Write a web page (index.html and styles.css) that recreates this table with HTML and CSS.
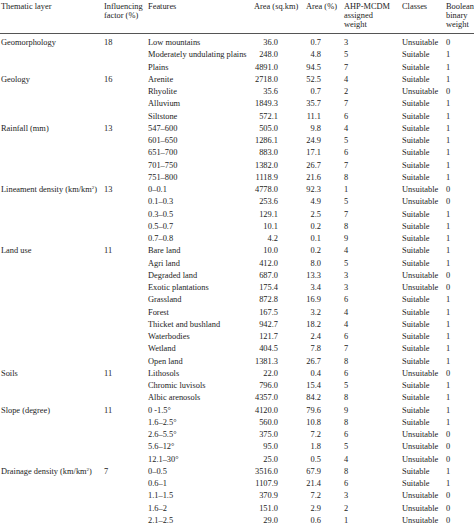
FILE: index.html
```html
<!DOCTYPE html>
<html>
<head>
<meta charset="utf-8">
<link rel="stylesheet" href="styles.css">
</head>
<body>
<table class="tbl">
<colgroup>
<col class="c-layer"><col class="c-factor"><col class="c-feat"><col class="c-area"><col class="c-pct"><col class="c-ahp"><col class="c-cls"><col class="c-bool">
</colgroup>
<thead>
<tr class="head">
<th>Thematic layer</th>
<th>Influencing<br>factor (%)</th>
<th>Features</th>
<th>Area (sq.km)</th>
<th>Area (%)</th>
<th>AHP-MCDM<br>assigned<br>weight</th>
<th>Classes</th>
<th>Boolean<br>binary<br>weight</th>
</tr>
</thead>
<tbody>
<tr class="first"><td>Geomorphology</td><td>18</td><td>Low mountains</td><td class="n1">36.0</td><td class="n2">0.7</td><td>3</td><td>Unsuitable</td><td>0</td></tr>
<tr><td></td><td></td><td>Moderately undulating plains</td><td class="n1">248.0</td><td class="n2">4.8</td><td>5</td><td>Suitable</td><td>1</td></tr>
<tr><td></td><td></td><td>Plains</td><td class="n1">4891.0</td><td class="n2">94.5</td><td>7</td><td>Suitable</td><td>1</td></tr>
<tr><td>Geology</td><td>16</td><td>Arenite</td><td class="n1">2718.0</td><td class="n2">52.5</td><td>4</td><td>Suitable</td><td>1</td></tr>
<tr><td></td><td></td><td>Rhyolite</td><td class="n1">35.6</td><td class="n2">0.7</td><td>2</td><td>Unsuitable</td><td>0</td></tr>
<tr><td></td><td></td><td>Alluvium</td><td class="n1">1849.3</td><td class="n2">35.7</td><td>7</td><td>Suitable</td><td>1</td></tr>
<tr><td></td><td></td><td>Siltstone</td><td class="n1">572.1</td><td class="n2">11.1</td><td>6</td><td>Suitable</td><td>1</td></tr>
<tr><td>Rainfall (mm)</td><td>13</td><td>547–600</td><td class="n1">505.0</td><td class="n2">9.8</td><td>4</td><td>Suitable</td><td>1</td></tr>
<tr><td></td><td></td><td>601–650</td><td class="n1">1286.1</td><td class="n2">24.9</td><td>5</td><td>Suitable</td><td>1</td></tr>
<tr><td></td><td></td><td>651–700</td><td class="n1">883.0</td><td class="n2">17.1</td><td>6</td><td>Suitable</td><td>1</td></tr>
<tr><td></td><td></td><td>701–750</td><td class="n1">1382.0</td><td class="n2">26.7</td><td>7</td><td>Suitable</td><td>1</td></tr>
<tr><td></td><td></td><td>751–800</td><td class="n1">1118.9</td><td class="n2">21.6</td><td>8</td><td>Suitable</td><td>1</td></tr>
<tr><td>Lineament density (km/km<sup>2</sup>)</td><td>13</td><td>0–0.1</td><td class="n1">4778.0</td><td class="n2">92.3</td><td>1</td><td>Unsuitable</td><td>0</td></tr>
<tr><td></td><td></td><td>0.1–0.3</td><td class="n1">253.6</td><td class="n2">4.9</td><td>5</td><td>Unsuitable</td><td>0</td></tr>
<tr><td></td><td></td><td>0.3–0.5</td><td class="n1">129.1</td><td class="n2">2.5</td><td>7</td><td>Suitable</td><td>1</td></tr>
<tr><td></td><td></td><td>0.5–0.7</td><td class="n1">10.1</td><td class="n2">0.2</td><td>8</td><td>Suitable</td><td>1</td></tr>
<tr><td></td><td></td><td>0.7–0.8</td><td class="n1">4.2</td><td class="n2">0.1</td><td>9</td><td>Suitable</td><td>1</td></tr>
<tr><td>Land use</td><td>11</td><td>Bare land</td><td class="n1">10.0</td><td class="n2">0.2</td><td>4</td><td>Suitable</td><td>1</td></tr>
<tr><td></td><td></td><td>Agri land</td><td class="n1">412.0</td><td class="n2">8.0</td><td>5</td><td>Suitable</td><td>1</td></tr>
<tr><td></td><td></td><td>Degraded land</td><td class="n1">687.0</td><td class="n2">13.3</td><td>3</td><td>Unsuitable</td><td>0</td></tr>
<tr><td></td><td></td><td>Exotic plantations</td><td class="n1">175.4</td><td class="n2">3.4</td><td>3</td><td>Unsuitable</td><td>0</td></tr>
<tr><td></td><td></td><td>Grassland</td><td class="n1">872.8</td><td class="n2">16.9</td><td>6</td><td>Suitable</td><td>1</td></tr>
<tr><td></td><td></td><td>Forest</td><td class="n1">167.5</td><td class="n2">3.2</td><td>4</td><td>Suitable</td><td>1</td></tr>
<tr><td></td><td></td><td>Thicket and bushland</td><td class="n1">942.7</td><td class="n2">18.2</td><td>4</td><td>Suitable</td><td>1</td></tr>
<tr><td></td><td></td><td>Waterbodies</td><td class="n1">121.7</td><td class="n2">2.4</td><td>6</td><td>Suitable</td><td>1</td></tr>
<tr><td></td><td></td><td>Wetland</td><td class="n1">404.5</td><td class="n2">7.8</td><td>7</td><td>Suitable</td><td>1</td></tr>
<tr><td></td><td></td><td>Open land</td><td class="n1">1381.3</td><td class="n2">26.7</td><td>8</td><td>Suitable</td><td>1</td></tr>
<tr><td>Soils</td><td>11</td><td>Lithosols</td><td class="n1">22.0</td><td class="n2">0.4</td><td>6</td><td>Unsuitable</td><td>0</td></tr>
<tr><td></td><td></td><td>Chromic luvisols</td><td class="n1">796.0</td><td class="n2">15.4</td><td>5</td><td>Suitable</td><td>1</td></tr>
<tr><td></td><td></td><td>Albic arenosols</td><td class="n1">4357.0</td><td class="n2">84.2</td><td>8</td><td>Suitable</td><td>1</td></tr>
<tr><td>Slope (degree)</td><td>11</td><td>0 -1.5°</td><td class="n1">4120.0</td><td class="n2">79.6</td><td>9</td><td>Suitable</td><td>1</td></tr>
<tr><td></td><td></td><td>1.6–2.5°</td><td class="n1">560.0</td><td class="n2">10.8</td><td>8</td><td>Suitable</td><td>1</td></tr>
<tr><td></td><td></td><td>2.6–5.5°</td><td class="n1">375.0</td><td class="n2">7.2</td><td>6</td><td>Unsuitable</td><td>0</td></tr>
<tr><td></td><td></td><td>5.6–12°</td><td class="n1">95.0</td><td class="n2">1.8</td><td>5</td><td>Unsuitable</td><td>0</td></tr>
<tr><td></td><td></td><td>12.1–30°</td><td class="n1">25.0</td><td class="n2">0.5</td><td>4</td><td>Unsuitable</td><td>0</td></tr>
<tr><td>Drainage density (km/km<sup>2</sup>)</td><td>7</td><td>0–0.5</td><td class="n1">3516.0</td><td class="n2">67.9</td><td>8</td><td>Suitable</td><td>1</td></tr>
<tr><td></td><td></td><td>0.6–1</td><td class="n1">1107.9</td><td class="n2">21.4</td><td>6</td><td>Suitable</td><td>1</td></tr>
<tr><td></td><td></td><td>1.1–1.5</td><td class="n1">370.9</td><td class="n2">7.2</td><td>3</td><td>Unsuitable</td><td>0</td></tr>
<tr><td></td><td></td><td>1.6–2</td><td class="n1">151.0</td><td class="n2">2.9</td><td>2</td><td>Unsuitable</td><td>0</td></tr>
<tr><td></td><td></td><td>2.1–2.5</td><td class="n1">29.0</td><td class="n2">0.6</td><td>1</td><td>Unsuitable</td><td>0</td></tr>
</tbody>
</table>
</body>
</html>
```
FILE: styles.css
```css
html, body {
  margin: 0;
  padding: 0;
  background: #ffffff;
  overflow: hidden;
}
.tbl {
  table-layout: fixed;
  width: 510px;
  border-collapse: collapse;
  font-family: "Liberation Serif", "Times New Roman", serif;
  font-size: 8.4px;
  color: #1c1c1c;
}
.c-layer { width: 104px; }
.c-factor { width: 44px; }
.c-feat { width: 106px; }
.c-area { width: 52px; }
.c-pct { width: 38px; }
.c-ahp { width: 58px; }
.c-cls { width: 44px; }
.c-bool { width: 64px; }
.tbl th, .tbl td {
  padding: 0;
  text-align: left;
  vertical-align: top;
  white-space: nowrap;
  overflow: visible;
  font-weight: normal;
}
.head th {
  line-height: 9px;
  padding-top: 1.5px;
  padding-bottom: 4px;
  border-bottom: 1.5px solid #555555;
}
.tbl th:first-child, .tbl td:first-child {
  padding-left: 1px;
}
.tbl tbody td {
  height: 12.25px;
  line-height: 11px;
}
.tbl tbody tr.first td {
  padding-top: 3.5px;
  height: 12.25px;
}
.tbl td.n1 {
  text-align: right;
  padding-right: 28px;
}
.tbl td.n2 {
  text-align: right;
  padding-right: 23px;
}
sup {
  font-size: 5px;
  line-height: 0;
  vertical-align: 3px;
}
```
